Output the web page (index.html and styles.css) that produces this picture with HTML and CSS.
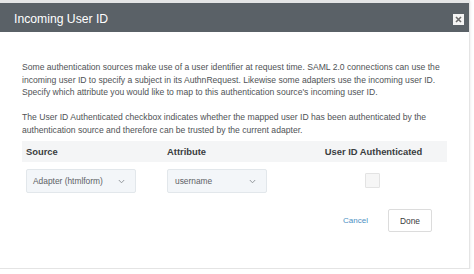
FILE: index.html
```html
<!DOCTYPE html>
<html>
<head>
<meta charset="utf-8">
<link rel="stylesheet" href="styles.css">
</head>
<body>
<div class="modal">
  <div class="strip"></div>
  <div class="header">
    <span class="title">Incoming User ID</span>
    <span class="close"><svg width="7" height="7" viewBox="0 0 7 7"><path d="M1 1L6 6M6 1L1 6" stroke="#6b6b6b" stroke-width="1.6"/></svg></span>
  </div>
  <div class="content">
    <p class="text">Some authentication sources make use of a user identifier at request time. SAML 2.0 connections can use the<br>incoming user ID to specify a subject in its AuthnRequest. Likewise some adapters use the incoming user ID.<br>Specify which attribute you would like to map to this authentication source's incoming user ID.</p>
    <p class="text">The User ID Authenticated checkbox indicates whether the mapped user ID has been authenticated by the<br>authentication source and therefore can be trusted by the current adapter.</p>
    <div class="table">
      <div class="th">Source</div>
      <div class="th">Attribute</div>
      <div class="th center">User ID Authenticated</div>
      <div class="td"><div class="select src"><span>Adapter (htmlform)</span><svg class="chev" width="7" height="5" viewBox="0 0 7 5"><path d="M0.8 1L3.5 3.8L6.2 1" fill="none" stroke="#8a8f94" stroke-width="0.9"/></svg></div></div>
      <div class="td"><div class="select attr"><span>username</span><svg class="chev" width="7" height="5" viewBox="0 0 7 5"><path d="M0.8 1L3.5 3.8L6.2 1" fill="none" stroke="#8a8f94" stroke-width="0.9"/></svg></div></div>
      <div class="td center"><span class="checkbox"></span></div>
    </div>
    <div class="footer">
      <span class="cancel">Cancel</span>
      <span class="done">Done</span>
    </div>
  </div>
</div>
</body>
</html>
```
FILE: styles.css
```css
html, body {
  margin: 0;
  padding: 0;
  background: #ffffff;
}
body {
  font-family: "Liberation Sans", Arial, sans-serif;
}
.modal {
  width: 469px;
  height: 268px;
  background: #ffffff;
  border-right: 1px solid #e4e4e4;
  border-bottom: 1px solid #e4e4e4;
  box-shadow: 1px 1px 2px rgba(0,0,0,0.06);
  overflow: hidden;
}
.strip {
  height: 3px;
  background: #e4e5e6;
}
.header {
  height: 29px;
  background: #5a6167;
  display: flex;
  align-items: center;
  justify-content: space-between;
  padding: 0 5px 0 14px;
}
.title {
  color: #ffffff;
  font-size: 12.2px;
  position: relative;
  top: 1px;
}
.close {
  width: 11px;
  height: 11px;
  background: #f4f4f4;
  display: flex;
  align-items: center;
  justify-content: center;
  position: relative;
  top: 2px;
}
.content {
  padding: 29px 0 0 22px;
}
.text {
  margin: 0 0 12.5px 0;
  font-size: 8.6px;
  line-height: 12.5px;
  color: #4f5356;
  white-space: nowrap;
}
.text + .text {
  margin-bottom: 5px;
}
.table {
  width: 425px;
  display: grid;
  grid-template-columns: 141px 137px 1fr;
}
.th {
  background: #f4f5f6;
  height: 21px;
  display: flex;
  align-items: center;
  padding-left: 4px;
  font-size: 9.4px;
  font-weight: bold;
  color: #3a3d40;
}
.th.center {
  justify-content: center;
  padding-left: 0;
}
.td {
  padding: 7px 0 0 4px;
  display: flex;
}
.td.center {
  justify-content: center;
  padding-left: 0;
  padding-top: 11px;
}
.select {
  height: 22px;
  background: #f3f6f9;
  border: 1px solid #e2e7eb;
  border-radius: 2px;
  display: flex;
  align-items: center;
  justify-content: space-between;
  font-size: 8.4px;
  color: #5d6266;
  box-sizing: border-box;
  height: 24px;
}
.select.src {
  width: 110px;
  padding: 0 10px 0 6px;
}
.select.attr {
  width: 100px;
  padding: 0 10px 0 7px;
}
.chev {
  display: block;
}
.checkbox {
  width: 13px;
  height: 13px;
  border: 1px solid #e3e3e3;
  background: #f6f6f6;
  border-radius: 1px;
  position: relative;
  left: -1px;
}
.footer {
  width: 410px;
  display: flex;
  justify-content: flex-end;
  align-items: center;
  margin-top: 16px;
}
.cancel {
  font-size: 8px;
  color: #4b8fc3;
  margin-right: 20px;
}
.done {
  width: 44px;
  height: 23px;
  box-sizing: border-box;
  border: 1px solid #dcdcdc;
  border-radius: 2px;
  display: flex;
  align-items: center;
  justify-content: center;
  font-size: 8.4px;
  color: #3a3d40;
  background: #ffffff;
}
```
